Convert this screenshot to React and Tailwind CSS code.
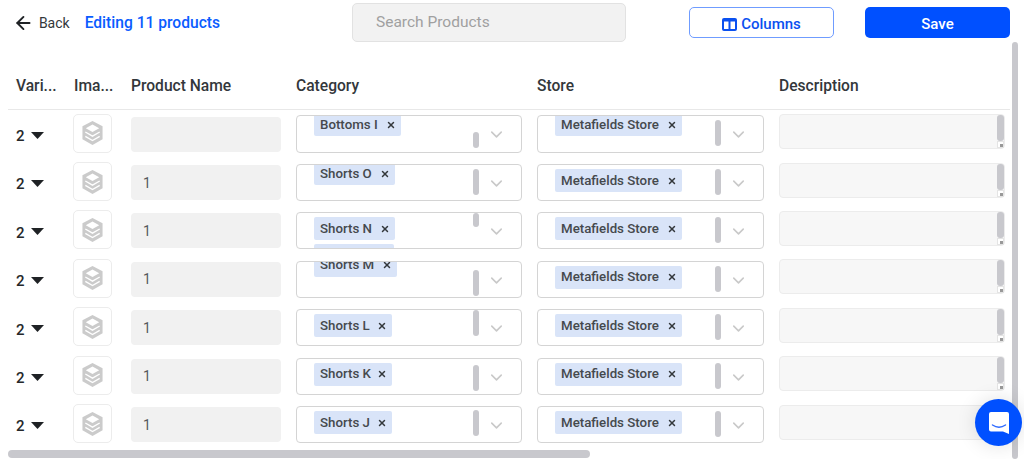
import { ArrowLeft, ChevronDown, X } from 'lucide-react';

const ROWS = [
  { name: '', cat: 'Bottoms I', catW: 'w-[87px]', catMt: 'mt-[-3px]', catThumb: 'top-[16px] h-[16px]', storeMt: 'mt-[-3px]', h: 'h-[38px]' },
  { name: '1', cat: 'Shorts O', catW: 'w-[81px]', catMt: 'mt-[-3px]', catThumb: 'top-[4px] h-[26px]', storeMt: 'mt-[4px]', h: 'h-[37px]' },
  { name: '1', cat: 'Shorts N', catW: 'w-[81px]', catMt: 'mt-[4px]', catThumb: 'top-0 h-[14px]', storeMt: 'mt-[4px]', h: 'h-[37px]', extra: true },
  { name: '1', cat: 'Shorts M', catW: 'w-[83px]', catMt: 'mt-[-8px]', catThumb: 'top-[8px] h-[26px]', storeMt: 'mt-[4px]', h: 'h-[37px]' },
  { name: '1', cat: 'Shorts L', catW: 'w-[78px]', catMt: 'mt-[4px]', catThumb: 'top-0 h-[26px]', storeMt: 'mt-[4px]', h: 'h-[37px]' },
  { name: '1', cat: 'Shorts K', catW: 'w-[78px]', catMt: 'mt-[4px]', catThumb: 'top-[6px] h-[26px]', storeMt: 'mt-[4px]', h: 'h-[37px]' },
  { name: '1', cat: 'Shorts J', catW: 'w-[78px]', catMt: 'mt-[4px]', catThumb: 'top-[3px] h-[26px]', storeMt: 'mt-[4px]', h: 'h-[37px]' },
];

function StackIcon() {
  return (
    <svg width="23" height="26" viewBox="0 0 24 26" fill="none">
      <path d="M12 0.5 L22.5 6 V19.5 L12 25.5 L1.5 19.5 V6 Z" fill="#cbcbcb" />
      <path d="M12 4 L19 8 L12 12 L5 8 Z" fill="#fff" />
      <path d="M4.5 12 L12 16.3 L19.5 12 M4.5 16.5 L12 20.8 L19.5 16.5" stroke="#fff" strokeWidth="1.4" />
    </svg>
  );
}

function Tag({ label, className }) {
  return (
    <div className={`flex h-[23px] shrink-0 items-center justify-between rounded-[2px] bg-[#d9e4f8] pl-[6px] pr-[5px] text-[13.3px] font-medium text-[#45494d] ${className}`}>
      <span>{label}</span>
      <X size={10} strokeWidth={3.5} className="text-[#33373b]" />
    </div>
  );
}

function Select({ width, label, tagW, tagMt, thumb, left, extra, h }) {
  return (
    <div className={`relative shrink-0 overflow-hidden rounded-[4px] border border-[#d4d4d4] bg-white ${width} ${h}`}>
      <div className={`flex flex-col gap-[4px] ${left} ${tagMt}`}>
        <Tag label={label} className={tagW} />
        {extra && <div className="h-[23px] w-[80px] rounded-[2px] bg-[#d9e4f8]" />}
      </div>
      <div className={`absolute w-[6px] rounded-[3px] bg-[#c8c8cd] ${thumb}`} style={{ right: 42 }} />
      <ChevronDown size={19} strokeWidth={2} className="absolute right-[15px] top-[9px] text-[#c9c9c9]" />
    </div>
  );
}

function Row({ row, last }) {
  return (
    <div className="grid h-[48.4px] grid-cols-[66px_57px_165px_241px_242px_226px] items-center">
      <div className="flex items-center pl-[8px] pt-[4px] text-[15px] font-medium text-[#25282b]">
        2
        <svg width="13" height="7" viewBox="0 0 13 7" className="mb-[2px] ml-[6px]">
          <path d="M0 0 H13 L6.5 7 Z" fill="#1f2225" />
        </svg>
      </div>
      <div className="-ml-[1px] mb-[2px] flex h-[39px] w-[39px] items-center justify-center rounded-[5px] border border-[#ececec] bg-white">
        <StackIcon />
      </div>
      <div className="flex h-[35px] w-[150px] items-center rounded-[4px] bg-[#f1f1f1] pl-[12px] pt-[1px] text-[14px] text-[#55595d]">
        {row.name}
      </div>
      <Select width="w-[226px]" label={row.cat} tagW={row.catW} tagMt={row.catMt} thumb={row.catThumb} left="ml-[17px]" extra={row.extra} h={row.h} />
      <Select width="w-[227px]" label="Metafields Store" tagW="w-[127px]" tagMt={row.storeMt} thumb="top-[4px] h-[26px]" left="ml-[17px]" h={row.h} />
      <div className="relative mb-[5px] h-[35px] w-[226px] rounded-[4px] border border-[#ececec] bg-[#f7f7f7]">
        <div className="absolute right-0 top-0 h-[26px] w-[7px] rounded-[3px] bg-[#c8c8cd]" />
        {!last && (
          <div className="absolute bottom-0 right-0 flex h-[7px] w-[7px] items-end justify-end border border-[#e4e4e4] bg-white">
            <div className="h-[3px] w-[3px] bg-[#999]" />
          </div>
        )}
      </div>
    </div>
  );
}

export default function App() {
  return (
    <div className="relative h-[459px] w-[1024px] overflow-hidden bg-white" style={{ fontFamily: 'Roboto, sans-serif' }}>
      {/* Top bar */}
      <div className="flex h-[45px] items-start">
        <div className="ml-[15px] mt-[11px] flex w-[205px] items-center">
          <ArrowLeft size={22} strokeWidth={2.2} className="-ml-[2px] text-[#1f2225]" />
          <span className="ml-[5px] text-[14px] text-[#33373b]">Back</span>
          <span className="ml-[15px] pt-[1px] text-[15.6px] font-medium whitespace-nowrap text-[#0a5cff]">Editing 11 products</span>
        </div>
        <div className="ml-[132px] mt-[3px] flex h-[39px] w-[274px] items-center rounded-[5px] border border-[#e2e2e2] bg-[#f2f2f2] pl-[23px] text-[15.5px] text-[#a0a0a0]">
          Search Products
        </div>
        <button className="ml-[63px] mt-[7px] flex h-[31px] w-[145px] items-center justify-center gap-[4px] rounded-[5px] border border-[#6f9cff] bg-white pt-[3px] text-[15px] font-medium text-[#0a50f0]">
          <svg width="15" height="13" viewBox="0 0 15 13" fill="none">
            <rect x="1" y="1" width="13" height="11" rx="1" stroke="#0a50f0" strokeWidth="2" />
            <path d="M7.5 1 V12 M1 2.5 H14" stroke="#0a50f0" strokeWidth="2" />
          </svg>
          Columns
        </button>
        <button className="ml-[31px] mt-[7px] h-[31px] w-[145px] rounded-[5px] bg-[#0050ff] pt-[3px] text-[15px] font-medium text-white">
          Save
        </button>
      </div>

      {/* Table */}
      <div className="ml-[8px] w-[1002px]">
        <div className="grid h-[65px] grid-cols-[66px_57px_165px_241px_242px_226px] items-center border-b border-[#e8e8e8] pt-[20px] text-[15.6px] font-medium text-[#33373b]">
          <div className="pl-[8px]">Vari...</div>
          <div>Ima...</div>
          <div>Product Name</div>
          <div>Category</div>
          <div>Store</div>
          <div>Description</div>
        </div>
        <div>
          {ROWS.map((row, i) => (
            <Row key={i} row={row} last={i === ROWS.length - 1} />
          ))}
        </div>
      </div>

      {/* Page scrollbars */}
      <div className="absolute right-[6px] top-[42px] h-[417px] w-[6px] rounded-[3px] bg-[#c8c8cd]" />
      <div className="absolute bottom-[1px] left-[8px] h-[8px] w-[582px] rounded-[4px] bg-[#c8c8cd]" />

      {/* Chat button */}
      <div className="absolute left-[975px] top-[399px] flex h-[47px] w-[47px] items-center justify-center rounded-full bg-[#0050ff] shadow-[0_0_20px_rgba(0,0,0,0.12)]">
        <svg width="22" height="24" viewBox="0 0 22 24">
          <path d="M3 1 H19 Q21 1 21 3 V23 L15 20.5 H3 Q1 20.5 1 18.5 V3 Q1 1 3 1 Z" fill="#fff" />
          <path d="M4.5 14 Q11 18.5 17.5 14" stroke="#2f6bff" strokeWidth="1.5" fill="none" strokeLinecap="round" />
        </svg>
      </div>
    </div>
  );
}
